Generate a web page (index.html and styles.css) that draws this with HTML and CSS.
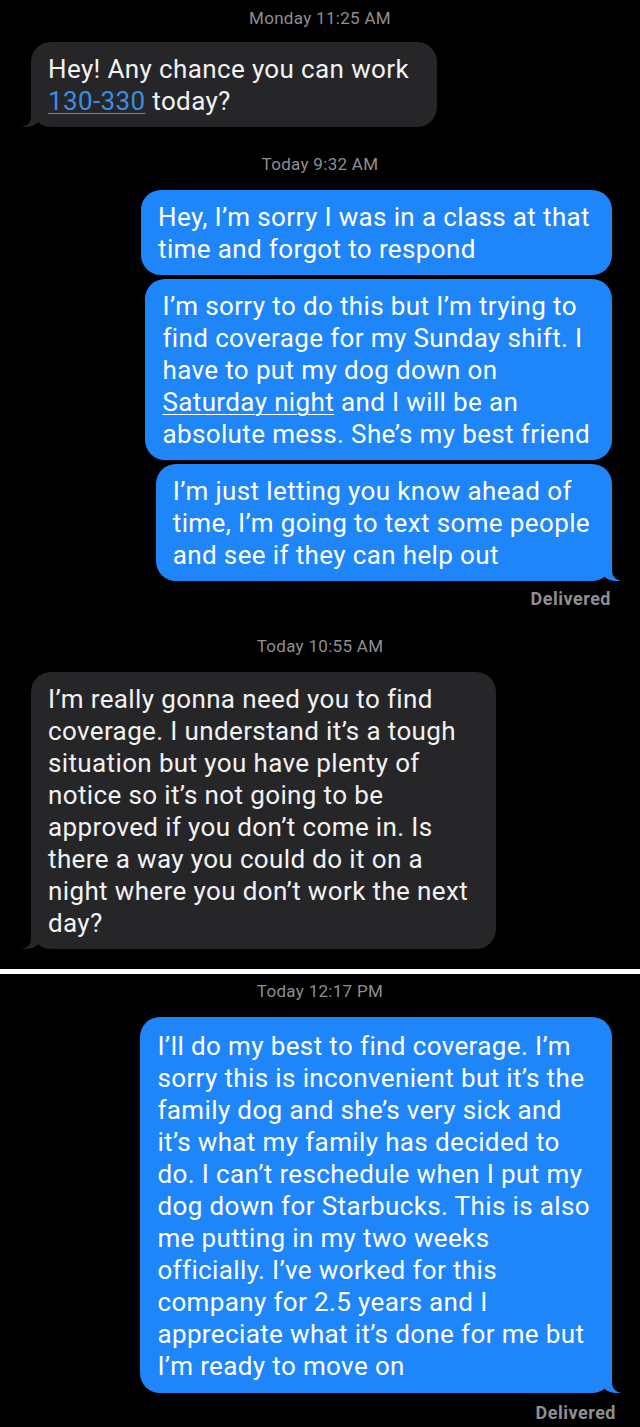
FILE: index.html
```html
<!DOCTYPE html>
<html lang="en">
<head>
<meta charset="utf-8">
<title>Messages</title>
<link rel="stylesheet" href="styles.css">
</head>
<body>
<main class="thread">
  <section class="part">
    <div class="stamp stamp-first">Monday 11:25 AM</div>
    <div class="row in">
      <div class="bubble gray tail-left">Hey! Any chance you can work<br><span class="link">130-330</span> today?</div>
    </div>

    <div class="stamp">Today 9:32 AM</div>
    <div class="group out">
      <div class="bubble blue">Hey, I’m sorry I was in a class at that<br>time and forgot to respond</div>
      <div class="bubble blue">I’m sorry to do this but I’m trying to<br>find coverage for my Sunday shift. I<br>have to put my dog down on<br><span class="uline">Saturday night</span> and I will be an<br>absolute mess. She’s my best friend</div>
      <div class="bubble blue tail-right">I’m just letting you know ahead of<br>time, I’m going to text some people<br>and see if they can help out</div>
    </div>
    <div class="status">Delivered</div>

    <div class="stamp">Today 10:55 AM</div>
    <div class="row in">
      <div class="bubble gray tail-left">I’m really gonna need you to find<br>coverage. I understand it’s a tough<br>situation but you have plenty of<br>notice so it’s not going to be<br>approved if you don’t come in. Is<br>there a way you could do it on a<br>night where you don’t work the next<br>day?</div>
    </div>
  </section>

  <hr class="divider">

  <section class="part">
    <div class="stamp stamp-after-divider">Today 12:17 PM</div>
    <div class="group out">
      <div class="bubble blue tail-right big">I’ll do my best to find coverage. I’m<br>sorry this is inconvenient but it’s the<br>family dog and she’s very sick and<br>it’s what my family has decided to<br>do. I can’t reschedule when I put my<br>dog down for Starbucks. This is also<br>me putting in my two weeks<br>officially. I’ve worked for this<br>company for 2.5 years and I<br>appreciate what it’s done for me but<br>I’m ready to move on</div>
    </div>
    <div class="status status-last">Delivered</div>
  </section>
</main>
</body>
</html>
```

FILE: styles.css
```css
* { box-sizing: border-box; }

html, body {
  margin: 0;
  padding: 0;
  background: #000;
}

body {
  width: 640px;
  min-height: 1427px;
  font-family: Roboto, "Liberation Sans", sans-serif;
  color: #fff;
}

.thread {
  display: flex;
  flex-direction: column;
}

.part {
  display: flex;
  flex-direction: column;
}

.stamp {
  text-align: center;
  font-size: 17px;
  line-height: 20px;
  font-weight: 400;
  letter-spacing: 0.3px;
  color: #8e8e93;
  margin: 27px 0 16px;
}

.stamp-first {
  margin-top: 8px;
  margin-bottom: 14px;
}

.stamp-after-divider {
  margin-top: 7px;
}

.row {
  display: flex;
}

.row.in {
  padding-left: 31px;
}

.group.out {
  display: flex;
  flex-direction: column;
  align-items: flex-end;
  gap: 4px;
  padding-right: 28px;
}

.bubble {
  position: relative;
  font-size: 26px;
  letter-spacing: 0.37px;
  line-height: 32px;
  padding: 11px 22px 10px 17px;
  border-radius: 20px;
  white-space: nowrap;
}

.gray {
  background: #262628;
  color: #f2f2f2;
  padding-left: 17px;
  padding-right: 28px;
}

.blue {
  background: #1f86f9;
  color: #fff;
}

.big {
  padding-top: 13px;
  padding-bottom: 11px;
}

.link {
  color: #3a8ee6;
  text-decoration: underline;
  text-decoration-thickness: 1px;
  text-underline-offset: 3px;
}

.uline {
  text-decoration: underline;
  text-decoration-thickness: 1px;
  text-underline-offset: 3px;
}

/* tails */
.tail-right::before {
  content: "";
  position: absolute;
  bottom: 0;
  right: -8px;
  width: 20px;
  height: 20px;
  background: #1f86f9;
  border-bottom-left-radius: 16px 14px;
}
.tail-right::after {
  content: "";
  position: absolute;
  bottom: 0;
  right: -10px;
  width: 10px;
  height: 20px;
  background: #000;
  border-bottom-left-radius: 10px;
}

.tail-left::before {
  content: "";
  position: absolute;
  bottom: 0;
  left: -9px;
  width: 20px;
  height: 20px;
  background: #262628;
  border-bottom-right-radius: 16px 14px;
}
.tail-left::after {
  content: "";
  position: absolute;
  bottom: 0;
  left: -11px;
  width: 11px;
  height: 20px;
  background: #000;
  border-bottom-right-radius: 10px;
}

.status {
  align-self: flex-end;
  padding-right: 29px;
  font-size: 18px;
  line-height: 20px;
  font-weight: 700;
  letter-spacing: 0.5px;
  color: #8e8e93;
  margin-top: 8px;
}

.status-last {
  padding-right: 24px;
  margin-top: 10px;
}

.divider {
  border: 0;
  margin: 20px 0 0;
  height: 5px;
  background: #fff;
}
```
